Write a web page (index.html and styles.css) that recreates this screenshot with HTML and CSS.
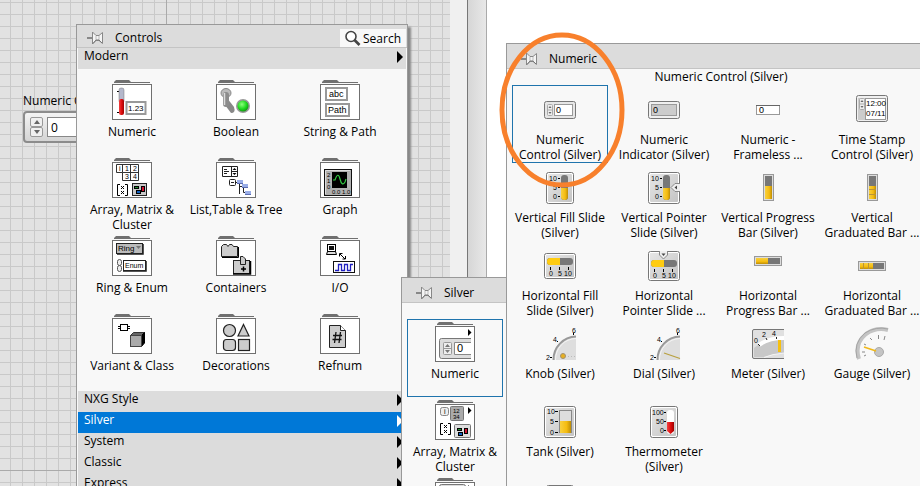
FILE: index.html
```html
<!DOCTYPE HTML>
<html lang="en">
	<head>
		<meta charset="utf-8">
		<meta name="viewport" content="width=device-width, initial-scale=1">
		<title>Controls Palette</title>
		<link rel="stylesheet" href="styles.css">
	</head>

	<body>

		<!-- shared shapes -->
		<svg class="defs" width="0" height="0" aria-hidden="true">
			<defs>
				<linearGradient id="silver" x1="0" y1="0" x2="1" y2="1">
					<stop offset="0" stop-color="#e6e6e6"/><stop offset="1" stop-color="#c4c4c4"/>
				</linearGradient>
				<radialGradient id="led" cx="0.4" cy="0.35" r="0.7">
					<stop offset="0" stop-color="#8cff7c"/><stop offset="0.6" stop-color="#1fd81f"/><stop offset="1" stop-color="#129012"/>
				</radialGradient>
				<linearGradient id="gold" x1="0" y1="0" x2="1" y2="0">
					<stop offset="0" stop-color="#f8d040"/><stop offset="0.6" stop-color="#f5bc10"/><stop offset="1" stop-color="#bd8d08"/>
				</linearGradient>
				<linearGradient id="goldh" x1="0" y1="0" x2="0" y2="1">
					<stop offset="0" stop-color="#f8d040"/><stop offset="0.6" stop-color="#f5bc10"/><stop offset="1" stop-color="#bd8d08"/>
				</linearGradient>
				<linearGradient id="red" x1="0" y1="0" x2="1" y2="0">
					<stop offset="0" stop-color="#f04040"/><stop offset="0.5" stop-color="#e01010"/><stop offset="1" stop-color="#a00000"/>
				</linearGradient>
			</defs>
			<symbol id="folder" viewBox="0 0 40 40">
				<path d="M2 3V2L4 0H17L19 2V3Z" fill="#707070"/>
				<path d="M2 2.5H38" stroke="#707070"/>
				<rect x="0.5" y="4.5" width="39" height="35" fill="#fff" stroke="#707070"/>
			</symbol>
			<symbol id="pin" viewBox="0 0 17 14">
				<path d="M0 7H6" stroke="#888" stroke-width="2"/>
				<path d="M5.5 1V13L9 9.5H12L15.5 12.5V1.5L12 4.5H9Z" fill="#f4f4f4" stroke="#888"/>
				<path d="M9 5V9.5M12 5V9.5" stroke="#bbb"/>
				<path d="M6 12.5L9 9H12L15 12" fill="none" stroke="#777"/>
			</symbol>
			<symbol id="frame-sq" viewBox="0 0 32 32">
				<rect x="0.5" y="0.5" width="31" height="31" rx="2" fill="#fff" stroke="#777"/>
				<rect x="2" y="2" width="28" height="28" rx="1" fill="url(#silver)"/>
			</symbol>
			<symbol id="frame-v" viewBox="0 0 28 32">
				<rect x="0.5" y="0.5" width="27" height="31" rx="2" fill="#fff" stroke="#777"/>
				<rect x="2" y="2" width="24" height="28" rx="1" fill="url(#silver)"/>
			</symbol>
			<symbol id="steps" viewBox="0 0 6 12">
				<rect x="0.5" y="0.5" width="5" height="11" rx="1" fill="#eee" stroke="#aaa"/>
				<path d="M0 6H6" stroke="#aaa"/>
				<path d="M1.5 4L3 2L4.5 4ZM1.5 8L3 10L4.5 8Z" fill="#666"/>
			</symbol>
			<symbol id="steps-lg" viewBox="0 0 9 13">
				<rect x="0.5" y="0.5" width="8" height="12" rx="1" fill="#eee" stroke="#999"/>
				<path d="M0 6.5H9" stroke="#999"/>
				<path d="M2 5L4.5 2L7 5ZM2 8L4.5 11L7 8Z" fill="#777"/>
			</symbol>
			<symbol id="matrix" viewBox="0 0 11 12">
				<path d="M3 0.5H0.5V11.5H3M8 0.5H10.5V11.5H8" fill="none" stroke="#000"/>
				<path d="M4 2.5H5M6 2.5H7M5 3.5H6M4 4.5H5M6 4.5H7M4 7.5H5M6 7.5H7M5 8.5H6M4 9.5H5M6 9.5H7" stroke="#000"/>
			</symbol>
			<symbol id="cluster" viewBox="0 0 16 13">
				<rect x="0.5" y="0.5" width="14" height="12" fill="#c8c8c8" stroke="#222"/>
				<rect x="2.5" y="3.5" width="4" height="2" fill="#209030" stroke="#000"/>
				<rect x="4.5" y="7.5" width="4" height="3" fill="#1060c0" stroke="#000"/>
				<rect x="9.5" y="3.5" width="3" height="5" fill="#d01030" stroke="#000"/>
			</symbol>
			<symbol id="dial" viewBox="0 0 40 40">
				<path d="M13 38A24 24 0 0 1 36 14V38Z" fill="#dedede"/>
				<path d="M13.5 38A23 23 0 0 1 36 14.500" fill="none" stroke="#999" stroke-width="2"/>
				<path d="M15.5 38A21 21 0 0 1 36 16.500" fill="none" stroke="#f4f4f4"/>
				<path d="M10 35.500H12M17 19.500H18M33.500 11V13" stroke="#000"/>
			</symbol>
		</svg>

		<!-- front panel behind the palettes -->
		<main class="desktop">
			<section class="panel">
				<div class="numeric-control">
					<label for="num">Numeric Control</label>
					<div class="num-body">
						<div class="spin">
							<button type="button" aria-label="Increment"><svg width="6" height="4"><path d="M0 4L3 0L6 4Z" fill="#666"/></svg></button>
							<button type="button" aria-label="Decrement"><svg width="6" height="4"><path d="M0 0L3 4L6 0Z" fill="#666"/></svg></button>
						</div>
						<input type="text" id="num" value="0">
					</div>
				</div>
			</section>
			<div class="scroll-track"></div>
			<div class="window-edge"></div>
			<section class="page"></section>
		</main>

		<!-- Controls -->
		<section class="palette palette-controls">
			<header class="title">
				<svg width="17" height="14"><use href="#pin"/></svg>
				<h2>Controls</h2>
				<button type="button" class="search">
					<svg width="17" height="17"><circle cx="7" cy="6.5" r="5" fill="#fff" stroke="#444" stroke-width="1.6"/><path d="M10.5 10L15.5 15" stroke="#444" stroke-width="2.6"/></svg>
					Search
				</button>
			</header>
			<button type="button" class="row">Modern <span class="arrow"></span></button>
			<div class="grid">
				<button type="button" class="cell">
					<svg width="40" height="40"><use href="#folder"/>
						<path d="M5 11.5H8M5 32.5H8" stroke="#000"/>
						<rect x="7" y="8" width="5" height="15" rx="2" fill="#b4b8cc" stroke="#777" stroke-width="0.5"/>
						<rect x="7" y="19" width="5" height="16" rx="2" fill="url(#red)"/>
						<rect x="14.5" y="22" width="19" height="12" fill="#fff" stroke="#999" stroke-width="2"/>
						<text x="16" y="31" class="t8">1.23</text>
					</svg>
					<span>Numeric</span>
				</button>
				<button type="button" class="cell">
					<svg width="40" height="40"><use href="#folder"/>
						<path d="M11 18L18 27Q20 33 15 33L9 25Z" fill="#888"/>
						<ellipse cx="10" cy="13" rx="5" ry="4.5" fill="#bbb" stroke="#888"/>
						<rect x="7" y="12" width="6" height="15" rx="3" fill="#8c8c8c"/>
						<path d="M8.5 13V25" stroke="#ddd" stroke-width="1.5"/>
						<circle cx="27" cy="26" r="7" fill="#999"/><circle cx="27" cy="26" r="5.5" fill="url(#led)"/>
					</svg>
					<span>Boolean</span>
				</button>
				<button type="button" class="cell">
					<svg width="40" height="40"><use href="#folder"/>
						<rect x="6" y="8" width="21" height="12" fill="#fff" stroke="#999" stroke-width="2"/>
						<rect x="6" y="24" width="23" height="12" fill="#fff" stroke="#999" stroke-width="2"/>
						<text x="9" y="17" class="t9">abc</text>
						<text x="8" y="33" class="t9">Path</text>
					</svg>
					<span>String &amp; Path</span>
				</button>

				<button type="button" class="cell">
					<svg width="40" height="40"><use href="#folder"/>
						<path d="M4.5 6.5H26.5V22.5H10.5V14.5H4.5ZM10.5 6.5V14.5H26.5M18.5 6.5V22.5" fill="none" stroke="#333"/>
						<text x="7" y="13" class="t7">i</text><text x="13" y="13" class="t7">1</text><text x="21" y="13" class="t7">2</text>
						<text x="13" y="21" class="t7">3</text><text x="21" y="21" class="t7">4</text>
						<use href="#matrix" x="5" y="26" width="11" height="12"/>
						<use href="#cluster" x="20" y="25" width="16" height="13"/>
					</svg>
					<span>Array, Matrix &amp;<br>Cluster</span>
				</button>
				<button type="button" class="cell">
					<svg width="40" height="40"><use href="#folder"/>
						<path d="M6.5 8.5H21.5V18.5H6.5ZM15.5 8.5V18.5M15.5 13.5H21.5" fill="none" stroke="#222"/>
						<path d="M8 11.5H11M8 13.5H13M8 15.5H11" stroke="#222"/>
						<path d="M16.5 12L18.5 10L20.5 12ZM16.5 15L18.5 17L20.5 15Z" fill="#000"/>
						<rect x="13.5" y="21.5" width="6" height="6" rx="1" fill="#fff" stroke="#222"/><path d="M15 24.5H18M20 24.5H23" stroke="#222"/>
						<path d="M23.5 25V36M23.5 28.5H27M27.5 28V34.5H30" fill="none" stroke="#222"/>
						<path d="M21 22H27V25H21ZM26 26H32V29H26ZM29 33H35V36H29Z" fill="#9aaee8"/>
						<path d="M21 25.5H27M26 29.5H32M29 36.5H35" stroke="#5a6cb0"/>
					</svg>
					<span>List,Table &amp; Tree</span>
				</button>
				<button type="button" class="cell">
					<svg width="40" height="40"><use href="#folder"/>
						<rect x="4.5" y="11.5" width="27" height="26" fill="#b0b0b0" stroke="#111"/>
						<path d="M5.5 36V12.5H30" fill="none" stroke="#ddd"/>
						<rect x="12" y="14" width="15" height="16" fill="#000"/>
						<path d="M13 22H15Q18 13 20 21T25 24L26 21" fill="none" stroke="#3c4" stroke-width="1.2"/>
						<text x="7" y="19" class="t6">2</text><text x="7" y="25" class="t6">1</text><text x="7" y="31" class="t6">0</text>
						<text x="12" y="36" class="t6">0.0 1.0</text>
					</svg>
					<span>Graph</span>
				</button>

				<button type="button" class="cell">
					<svg width="40" height="40"><use href="#folder"/>
						<rect x="4.5" y="7.5" width="26" height="10" fill="#bbb" stroke="#222"/><path d="M5 18.5H31.5V8" fill="none" stroke="#555"/>
						<text x="6" y="15" class="t8">Ring</text><path d="M24 10H29L26.5 13Z" fill="#777"/>
						<rect x="5.5" y="23.5" width="4" height="6" rx="2" fill="#eee" stroke="#555"/><rect x="5.5" y="29.5" width="4" height="6" rx="2" fill="#eee" stroke="#555"/>
						<rect x="11.5" y="24.5" width="22" height="10" fill="#fff" stroke="#222"/><path d="M11 35.5H34.5V25" fill="none" stroke="#555"/>
						<text x="13" y="32" class="t7">Enum</text>
					</svg>
					<span>Ring &amp; Enum</span>
				</button>
				<button type="button" class="cell">
					<svg width="40" height="40"><use href="#folder"/>
						<path d="M5.5 20.5V10.5L7.5 8.5H10.5L12 10.5L13.5 8.5H16L17.5 10.5H21.5V20.5Z" fill="#ccc" stroke="#222"/>
						<path d="M6 21.5H22.5V11" fill="none" stroke="#000"/>
						<rect x="17.5" y="24.5" width="16" height="13" fill="#ccc" stroke="#222"/><path d="M17 38H34.5V25" fill="none" stroke="#000" stroke-width="1.5"/>
						<path d="M24.5 28.5V20.5H27L29.5 23V28.5Z" fill="#ccc" stroke="#222"/>
						<path d="M25 33H30M27.5 30.5V35.500" stroke="#000" stroke-width="1.5"/>
					</svg>
					<span>Containers</span>
				</button>
				<button type="button" class="cell">
					<svg width="40" height="40"><use href="#folder"/>
						<rect x="7.5" y="8.5" width="8" height="7" fill="#fff" stroke="#000"/><rect x="9" y="10" width="5" height="4" fill="#111"/>
						<path d="M6.5 18.5L7.5 15.5H15.5L16.5 18.5Z" fill="#ddd" stroke="#000"/>
						<path d="M20 18L25 23M19.5 20.5V17.5H22.5M25.5 20V23H22.5" fill="none" stroke="#000"/>
						<rect x="13.5" y="25.5" width="21" height="11" fill="#fff" stroke="#111"/>
						<path d="M15 34.5H18.5V28.5H21.5V34.5H24.5V28.5H27.5V34.5H30.5V28.5H33" fill="none" stroke="#2020c0" stroke-width="1.3"/>
					</svg>
					<span>I/O</span>
				</button>

				<button type="button" class="cell">
					<svg width="40" height="40"><use href="#folder"/>
						<rect x="8.5" y="10.5" width="7" height="6" fill="#fff" stroke="#000"/><path d="M6 12.5H8M6 14.5H8M16 12.5H18M16 14.5H18" stroke="#000"/>
						<path d="M18.5 21.5L21.5 18.5H32.5L30.5 21.5Z" fill="#666" stroke="#333"/>
						<path d="M29.5 21.5L32.5 18.5V29L29.5 32.5Z" fill="#000" stroke="#000"/>
						<rect x="18.5" y="21.5" width="11" height="11" fill="#aaa" stroke="#444"/>
					</svg>
					<span>Variant &amp; Class</span>
				</button>
				<button type="button" class="cell">
					<svg width="40" height="40"><use href="#folder"/>
						<g fill="#ccc" stroke="#222" stroke-width="1.2">
							<circle cx="13.5" cy="16.5" r="6"/><path d="M27.5 10.5L33 22H22Z"/>
							<rect x="7.5" y="25.5" width="12" height="11" rx="3"/><rect x="22.5" y="25.5" width="11" height="11"/>
						</g>
					</svg>
					<span>Decorations</span>
				</button>
				<button type="button" class="cell">
					<svg width="40" height="40"><use href="#folder"/>
						<path d="M9.5 11.5H20.5L25.5 16.5V33.5H9.5Z" fill="#ccc" stroke="#222"/><path d="M20.5 11.5V16.5H25.5" fill="#fff" stroke="#222"/>
						<path d="M16 18L14.5 29M20.5 18L19 29M13 21.5H22M12.5 25.5H21.5" stroke="#111" stroke-width="1.3"/>
					</svg>
					<span>Refnum</span>
				</button>
			</div>
			<div class="rows">
				<button type="button" class="row">NXG Style <span class="arrow"></span></button>
				<button type="button" class="row active">Silver <span class="arrow"></span></button>
				<button type="button" class="row">System <span class="arrow"></span></button>
				<button type="button" class="row">Classic <span class="arrow"></span></button>
				<button type="button" class="row">Express <span class="arrow"></span></button>
			</div>
		</section>

		<!-- Silver -->
		<section class="palette palette-silver">
			<header class="title">
				<svg width="17" height="14"><use href="#pin"/></svg>
				<h2>Silver</h2>
			</header>
			<div class="grid">
				<button type="button" class="cell selected">
					<svg width="40" height="40"><use href="#folder"/>
						<path d="M33 7L36.5 10.5L33 14Z" fill="#000"/>
						<path d="M36 16.5H6.5Q4.5 16.5 4.5 18.5V34Q4.5 36.5 6.5 36.5H36" fill="#ddd" stroke="#777"/>
						<use href="#steps-lg" x="8" y="20" width="9" height="13"/>
						<path d="M36 20.5H19.5V32.5H36" fill="#fff" stroke="#888"/>
						<text x="22" y="30" class="t10">0</text>
					</svg>
					<span>Numeric</span>
				</button>
				<button type="button" class="cell">
					<svg width="40" height="40"><use href="#folder"/>
						<path d="M33 7L36.5 10.5L33 14Z" fill="#000"/>
						<rect x="5.5" y="7.5" width="8" height="8" rx="2" fill="#eee" stroke="#888"/><text x="9" y="14" class="t7">i</text>
						<rect x="15.5" y="6.5" width="13" height="14" rx="1" fill="#aaa" stroke="#777"/>
						<text x="18" y="13" class="t6">12</text><text x="18" y="19" class="t6">34</text>
						<use href="#matrix" x="5" y="23" width="11" height="12"/>
						<rect x="19.5" y="24.5" width="16" height="13" rx="1" fill="#ddd" stroke="#777"/>
						<rect x="22.5" y="28.5" width="4" height="2" fill="#209030" stroke="#000"/><rect x="23.5" y="32.5" width="4" height="3" fill="#1060c0" stroke="#000"/><rect x="29.5" y="28.5" width="3" height="5" fill="#d01030" stroke="#000"/>
					</svg>
					<span>Array, Matrix &amp;<br>Cluster</span>
				</button>
				<button type="button" class="cell" aria-label="Boolean">
					<svg width="40" height="40"><use href="#folder"/>
						<rect x="4.5" y="6.5" width="26" height="20" rx="2" fill="#ddd" stroke="#777"/>
						<path d="M33 7L36.5 10.5L33 14Z" fill="#000"/>
					</svg>
				</button>
			</div>
		</section>

		<!-- Numeric -->
		<section class="palette palette-numeric">
			<header class="title">
				<svg width="17" height="14"><use href="#pin"/></svg>
				<h2>Numeric</h2>
			</header>
			<p class="hint">Numeric Control (Silver)</p>
			<div class="grid">
				<button type="button" class="cell selected">
					<svg width="40" height="40">
						<rect x="4.5" y="13.5" width="31" height="17" rx="2" fill="#e6e6e6" stroke="#777"/>
						<use href="#steps" x="7" y="16" width="6" height="12"/>
						<rect x="14.5" y="16.5" width="18" height="11" fill="#fff" stroke="#999"/><text x="16" y="25" class="t9">0</text>
					</svg>
					<span>Numeric<br>Control (Silver)</span>
				</button>
				<button type="button" class="cell">
					<svg width="40" height="40">
						<rect x="4.5" y="13.5" width="31" height="17" rx="2" fill="#f0f0f0" stroke="#777"/>
						<rect x="7.5" y="16.5" width="25" height="11" fill="#ccc" stroke="#999"/><text x="9" y="25" class="t9">0</text>
					</svg>
					<span>Numeric<br>Indicator (Silver)</span>
				</button>
				<button type="button" class="cell">
					<svg width="40" height="40">
						<rect x="8.5" y="17.5" width="23" height="9" fill="#fff" stroke="#999"/><path d="M8 17.5H32" stroke="#666"/><text x="11" y="25" class="t9">0</text>
					</svg>
					<span>Numeric -<br>Frameless ...</span>
				</button>
				<button type="button" class="cell">
					<svg width="40" height="40">
						<rect x="4.5" y="7.5" width="31" height="26" rx="2" fill="#f0f0f0" stroke="#777"/>
						<rect x="6" y="10" width="7" height="22" fill="#ccc"/><use href="#steps" x="7" y="10" width="6" height="12"/>
						<rect x="13.5" y="10.5" width="20" height="21" fill="#fff" stroke="#999"/>
						<text x="14" y="18" class="t8">12:00</text><text x="14" y="28" class="t8">07/11</text>
					</svg>
					<span>Time Stamp<br>Control (Silver)</span>
				</button>

				<button type="button" class="cell">
					<svg width="40" height="40">
						<use href="#frame-v" x="6" y="6" width="28" height="32"/>
						<rect x="21" y="9" width="7" height="25" rx="3" fill="#777"/><path d="M21 22H28V31Q28 34 24.5 34T21 31Z" fill="url(#gold)"/>
						<path d="M18 12.5H20M18 21.5H20M18 30.5H20" stroke="#000"/>
						<text x="9" y="15" class="t7">10</text><text x="13" y="24" class="t7">5</text><text x="13" y="33" class="t7">0</text>
					</svg>
					<span>Vertical Fill Slide<br>(Silver)</span>
				</button>
				<button type="button" class="cell">
					<svg width="40" height="40">
						<use href="#frame-sq" x="4" y="6" width="32" height="32"/>
						<rect x="19" y="9" width="7" height="25" rx="3" fill="#777"/><path d="M19 22H26V31Q26 34 22.5 34T19 31Z" fill="url(#gold)"/>
						<path d="M16 12.5H18M16 21.5H18M16 30.5H18" stroke="#000"/>
						<text x="7" y="15" class="t7">10</text><text x="11" y="24" class="t7">5</text><text x="11" y="33" class="t7">0</text>
						<path d="M36 17.5H31L27 21.5L31 25.5H36" fill="#eee" stroke="#888"/><path d="M33 19.5V23.5L30.5 21.5Z" fill="#444"/>
					</svg>
					<span>Vertical Pointer<br>Slide (Silver)</span>
				</button>
				<button type="button" class="cell">
					<svg width="40" height="40">
						<rect x="15.5" y="8.5" width="10" height="26" fill="#777" stroke="#999"/><rect x="16.5" y="9.5" width="8" height="24" fill="none" stroke="#ddd"/><rect x="17" y="20" width="7" height="13" fill="url(#gold)"/>
					</svg>
					<span>Vertical Progress<br>Bar (Silver)</span>
				</button>
				<button type="button" class="cell">
					<svg width="40" height="40">
						<rect x="15.5" y="8.5" width="10" height="26" fill="#777" stroke="#999"/><rect x="16.5" y="9.5" width="8" height="24" fill="none" stroke="#ddd"/><rect x="17" y="20" width="7" height="13" fill="url(#gold)"/><path d="M17 23.5H24M17 28.5H24" stroke="#b99438"/>
					</svg>
					<span>Vertical<br>Graduated Bar ...</span>
				</button>

				<button type="button" class="cell">
					<svg width="40" height="40">
						<rect x="4.5" y="9.5" width="31" height="25" rx="2" fill="#fff" stroke="#777"/><rect x="6" y="11" width="28" height="22" fill="url(#silver)"/>
						<rect x="7" y="14" width="26" height="7" rx="3" fill="#777"/><path d="M20 14H10Q7 14 7 17.5T10 21H20Z" fill="#fc1"/>
						<path d="M10.5 23V26M19.5 23V26M28.5 23V26" stroke="#000"/>
						<text x="9" y="32" class="t7">0</text><text x="18" y="32" class="t7">5</text><text x="24" y="32" class="t7">10</text>
					</svg>
					<span>Horizontal Fill<br>Slide (Silver)</span>
				</button>
				<button type="button" class="cell">
					<svg width="40" height="40">
						<rect x="4.5" y="7.5" width="31" height="29" rx="2" fill="#fff" stroke="#777"/><rect x="6" y="9" width="28" height="26" fill="url(#silver)"/>
						<rect x="7" y="16" width="26" height="7" rx="3" fill="#777"/><path d="M20 16H10Q7 16 7 19.5T10 23H20Z" fill="#fc1"/>
						<path d="M15.5 7V11L19.5 15L23.5 11V7" fill="#eee" stroke="#888"/><path d="M17.5 9.5H21.5L19.5 12Z" fill="#444"/>
						<path d="M10.5 25V28M19.5 25V28M28.5 25V28" stroke="#000"/>
						<text x="9" y="34" class="t7">0</text><text x="18" y="34" class="t7">5</text><text x="24" y="34" class="t7">10</text>
					</svg>
					<span>Horizontal<br>Pointer Slide ...</span>
				</button>
				<button type="button" class="cell">
					<svg width="40" height="40">
						<rect x="6.5" y="12.5" width="27" height="9" fill="#777" stroke="#999"/><rect x="7.5" y="13.5" width="25" height="7" fill="none" stroke="#ddd"/><rect x="8" y="14" width="12" height="6" fill="url(#goldh)"/>
					</svg>
					<span>Horizontal<br>Progress Bar ...</span>
				</button>
				<button type="button" class="cell">
					<svg width="40" height="40">
						<rect x="6.5" y="17.5" width="27" height="9" fill="#777" stroke="#999"/><rect x="7.5" y="18.5" width="25" height="7" fill="none" stroke="#ddd"/><rect x="8" y="19" width="13" height="6" fill="url(#goldh)"/><path d="M11.5 19V25M16.5 19V25" stroke="#b99438"/>
					</svg>
					<span>Horizontal<br>Graduated Bar ...</span>
				</button>

				<button type="button" class="cell">
					<svg width="40" height="40">
						<use href="#dial"/>
						<text x="6" y="38" class="t7">2</text><text x="13" y="20" class="t7">4</text><text x="32" y="11" class="t7">6</text>
						<path d="M28 34.5H35" stroke="#bbb" stroke-dasharray="1 2"/>
						<circle cx="23" cy="34" r="2.5" fill="#e8b020" stroke="#a09070"/>
					</svg>
					<span>Knob (Silver)</span>
				</button>
				<button type="button" class="cell">
					<svg width="40" height="40">
						<use href="#dial"/>
						<text x="6" y="38" class="t7">2</text><text x="13" y="20" class="t7">4</text><text x="32" y="11" class="t7">6</text>
						<path d="M20 31L36 36.5" stroke="#b8a040" stroke-width="1.3"/>
					</svg>
					<span>Dial (Silver)</span>
				</button>
				<button type="button" class="cell">
					<svg width="40" height="40">
						<path d="M36 7.5H6Q4.5 7.5 4.5 9V35Q4.5 36.5 6 36.5H36" fill="#e0e0e0" stroke="#777"/>
						<path d="M6 35V26Q18 16 36 17V31Q24 32 16 35Z" fill="#c8c8c8"/>
						<path d="M11 23Q20 16 36 16" fill="none" stroke="#fff" stroke-width="4"/>
						<path d="M16 35.5Q24 32 36 31" fill="none" stroke="#f4f4f4"/>
						<rect x="30" y="18" width="3" height="12" fill="#f6c010"/>
						<text x="6" y="21" class="t7">0</text><text x="14" y="15" class="t7">2</text><text x="24" y="14" class="t7">4</text>
						<path d="M10 22L12 24M18 16L19 18M28.5 15V17" stroke="#222"/>
					</svg>
					<span>Meter (Silver)</span>
				</button>
				<button type="button" class="cell">
					<svg width="40" height="40">
						<path d="M7 37Q2 22 14 12Q24 5 36 8V36H7Z" fill="#f8f8f8"/>
						<path d="M7 37Q2 22 14 12Q24 5 36 8" fill="none" stroke="#c4c4c4" stroke-width="4"/>
						<path d="M5 36Q1 21 13 11Q24 4 36 7" fill="none" stroke="#a4a4a4"/>
						<path d="M10 30H13M12 22L14 23M18 16L20 18M26.5 13V17M33 14L32 18M12 34L14 33" stroke="#888"/>
						<circle cx="27" cy="30" r="4.5" fill="#c4c4c4" stroke="#aaa"/>
						<path d="M12 25L24 29" stroke="#f0b818" stroke-width="1.6"/>
					</svg>
					<span>Gauge (Silver)</span>
				</button>

				<button type="button" class="cell">
					<svg width="40" height="40">
						<use href="#frame-sq" x="4" y="6" width="32" height="32"/>
						<rect x="19.5" y="10.5" width="12" height="22" fill="#ddd" stroke="#888"/><rect x="20" y="21" width="11" height="12" fill="url(#gold)"/>
						<path d="M15 11.5H18M15 21.5H18M15 32.5H18" stroke="#000"/>
						<text x="7" y="14" class="t7">10</text><text x="10" y="24" class="t7">5</text><text x="10" y="35" class="t7">0</text>
					</svg>
					<span>Tank (Silver)</span>
				</button>
				<button type="button" class="cell">
					<svg width="40" height="40">
						<use href="#frame-v" x="6" y="6" width="28" height="32"/>
						<rect x="23" y="10" width="7" height="24" rx="3" fill="#fff"/><path d="M23 22H30V31L26.5 34L23 31Z" fill="url(#red)"/>
						<path d="M20 12.5H22M20 21.5H22M20 30.5H22" stroke="#000"/>
						<text x="8" y="15" class="t7">100</text><text x="12" y="24" class="t7">50</text><text x="16" y="33" class="t7">0</text>
					</svg>
					<span>Thermometer<br>(Silver)</span>
				</button>
				<div class="cell"></div>
				<div class="cell"></div>
				<button type="button" class="cell" aria-label="Scroll bar">
					<svg width="40" height="40"><use href="#frame-v" x="6" y="7" width="28" height="32"/></svg>
				</button>
			</div>
		</section>

		<!-- marker round the selected control -->
		<svg class="marker" width="126" height="157" aria-hidden="true"><ellipse cx="63" cy="78" rx="60" ry="75" fill="none" stroke="#f8802c" stroke-width="5"/></svg>

	</body>
</html>
```
FILE: styles.css
```css
*{
	box-sizing: border-box;
}

html, body{
	margin: 0;
	padding: 0;
	height: 100%;
	overflow: hidden;
}

body, button, input{
	font-family: "Open Sans", "Noto Sans", sans-serif;
	font-size: 12px;
	line-height: 15px;
	color: #000;
}

button{
	margin: 0;
	padding: 0;
	border: none;
	background: none;
}

h2, p{
	margin: 0;
	font-size: 12px;
	font-weight: normal;
}

svg{
	display: block;
	flex: none;
}

.defs{
	position: absolute;
}

/* icon lettering */
text{
	font-family: "Liberation Sans", Arial, sans-serif;
	fill: #000;
}
.t6{ font-size: 6px; }
.t7{ font-size: 7px; }
.t8{ font-size: 8px; }
.t9{ font-size: 9px; }
.t10{ font-size: 11px; }

/* background windows */
.desktop{
	display: flex;
	height: 100%;
}

.panel{
	flex: 0 0 450px;
	padding: 93px 0 0 23px;
	background-color: #e2e2e2;
	background-image:
		linear-gradient(#aaa, #aaa),
		linear-gradient(#aaa, #aaa),
		linear-gradient(90deg, #c9c9c9 1px, transparent 1px),
		linear-gradient(#c9c9c9 1px, transparent 1px);
	background-size: 1px 100%, 100% 1px, 12px 12px, 12px 12px;
	background-position: 166px 0, 0 470px, 10px 0, 0 2px;
	background-repeat: no-repeat, no-repeat, repeat, repeat;
}

.scroll-track{
	flex: 0 0 18px;
	background-color: #f0f0f0;
	border-right: 1px solid #777;
}

.window-edge{
	flex: 0 0 19px;
	background: linear-gradient(90deg, #d6d6d6, #e8e8e8);
	border-right: 1px solid #aaa;
}

.page{
	flex: 1;
	background-color: #fff;
}

.numeric-control{
	width: 120px;
}

.numeric-control label{
	display: block;
	margin-bottom: 3px;
	white-space: nowrap;
}

.num-body{
	display: flex;
	gap: 4px;
	height: 32px;
	padding: 4px 5px;
	border: 2px solid #8c8c8c;
	border-radius: 4px;
	background: linear-gradient(#f4f4f4, #d4d4d4);
}

.spin{
	display: flex;
	flex-direction: column;
	width: 13px;
}

.spin button{
	display: flex;
	flex: 1;
	align-items: center;
	justify-content: center;
	border: 1px solid #999;
	border-radius: 2px;
	background-color: #f0f0f0;
}

.num-body input{
	flex: 1;
	min-width: 0;
	padding: 0 3px;
	border: 1px solid #888;
	background-color: #fff;
}

/* floating palettes */
.palette{
	position: absolute;
	bottom: -20px;
	border: 1px solid #999;
	background-color: #f8f8f8;
	box-shadow: 3px 3px 2px #888;
	overflow: hidden;
}

.palette-controls{
	left: 76px;
	top: 24px;
	width: 332px;
}

.palette-silver{
	left: 401px;
	top: 277px;
	width: 107px;
	box-shadow: none;
}

.palette-numeric{
	left: 506px;
	top: 43px;
	width: 430px;
}

.title{
	display: flex;
	align-items: center;
	gap: 11px;
	height: 25px;
	padding: 5px 0 0 14px;
	border-bottom: 1px solid #c4c4c4;
	background-color: #dcdcdc;
}

.palette-controls .title{
	height: 23px;
	padding: 3px 0 0 10px;
}

.title h2{
	flex: 1;
}

.search{
	display: flex;
	align-items: center;
	align-self: flex-end;
	gap: 2px;
	height: 18px;
	margin-right: 1px;
	padding: 0 5px 0 4px;
	background-color: #f8f8f8;
}

.row{
	display: flex;
	justify-content: space-between;
	width: calc(100% - 2px);
	height: 21px;
	margin-left: 1px;
	padding: 0 3px 0 6px;
	background-color: #dcdcdc;
	text-align: left;
}

.row.active{
	background-color: #0078d7;
	color: #fff;
}

.arrow{
	width: 0;
	height: 0;
	margin-top: 3px;
	border: solid transparent;
	border-width: 6px 0 6px 6px;
	border-left-color: #000;
}

.active .arrow{
	border-left-color: #fff;
}

.rows{
	margin-top: 2px;
}

.grid{
	display: grid;
	grid-template-columns: repeat(auto-fill, 104px);
	grid-auto-rows: 78px;
}

.palette-controls .grid{
	padding: 8px 0 0 3px;
}

.palette-silver .grid{
	padding-top: 16px;
	margin-left: 1px;
}

.palette-numeric .grid{
	padding-left: 1px;
}

.hint{
	height: 16px;
	text-align: center;
}

.cell{
	display: flex;
	flex-direction: column;
	align-items: center;
	gap: 4px;
	margin: 0 4px;
	padding-top: 3px;
	text-align: center;
	white-space: nowrap;
}

.cell.selected{
	box-shadow: inset 0 0 0 1px #1f74ad;
}

/* sits over the palette */
.marker{
	position: absolute;
	left: 499px;
	top: 32px;
	pointer-events: none;
}
```
